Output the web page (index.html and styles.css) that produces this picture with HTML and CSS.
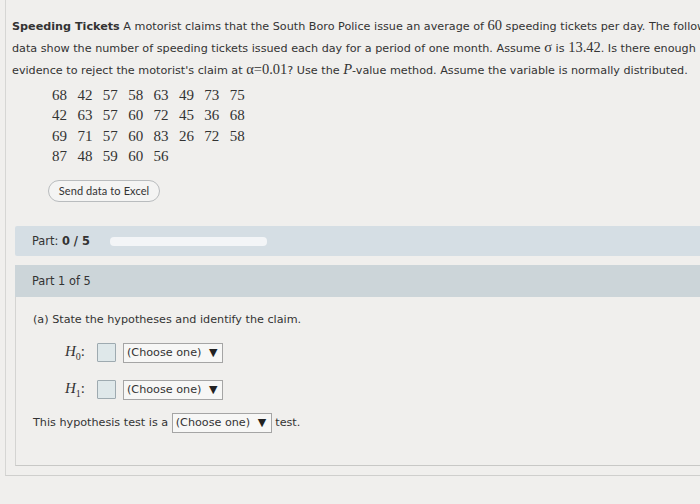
FILE: index.html
```html
<!DOCTYPE html>
<html>
<head>
<meta charset="utf-8">
<link rel="stylesheet" href="styles.css">
</head>
<body>
<div class="page">
  <div class="problem">
    <p class="statement"><b>Speeding Tickets</b> A motorist claims that the South Boro Police issue an average of <span class="m">60</span> speeding tickets per day. The following<br>data show the number of speeding tickets issued each day for a period of one month. Assume <span class="m">σ</span> is <span class="m">13.42</span>. Is there enough<br>evidence to reject the motorist's claim at <span class="m">α=0.01</span>? Use the <span class="m"><i>P</i></span>-value method. Assume the variable is normally distributed.</p>
    <div class="data">
      <div class="row"><span>68</span><span>42</span><span>57</span><span>58</span><span>63</span><span>49</span><span>73</span><span>75</span></div>
      <div class="row"><span>42</span><span>63</span><span>57</span><span>60</span><span>72</span><span>45</span><span>36</span><span>68</span></div>
      <div class="row"><span>69</span><span>71</span><span>57</span><span>60</span><span>83</span><span>26</span><span>72</span><span>58</span></div>
      <div class="row"><span>87</span><span>48</span><span>59</span><span>60</span><span>56</span></div>
    </div>
    <div class="btnrow"><span class="excel">Send data to Excel</span></div>
  </div>
  <div class="parts">
    <div class="partbar">
      <span>Part: <b>0 / 5</b></span>
      <span class="progress"></span>
    </div>
    <div class="partpanel">
      <div class="parthead">Part 1 of 5</div>
      <div class="partbody">
        <p class="q">(a) State the hypotheses and identify the claim.</p>
        <div class="hyp">
          <span class="hlabel"><i>H</i><sub>0</sub>:</span>
          <span class="box"></span>
          <span class="sel">(Choose one) <span class="arr">▼</span></span>
        </div>
        <div class="hyp">
          <span class="hlabel"><i>H</i><sub>1</sub>:</span>
          <span class="box"></span>
          <span class="sel">(Choose one) <span class="arr">▼</span></span>
        </div>
        <div class="testline">This hypothesis test is a <span class="sel">(Choose one) <span class="arr">▼</span></span> test.</div>
      </div>
    </div>
  </div>
</div>
</body>
</html>
```
FILE: styles.css
```css
html, body {
  margin: 0;
  padding: 0;
}
body {
  background: #f0efed;
  font-family: "DejaVu Sans", Verdana, sans-serif;
  color: #333;
  width: 700px;
  height: 504px;
  overflow: hidden;
}
.page {
  margin-left: 5px;
  width: 720px;
  height: 476px;
  border-left: 1px solid #d6d6d4;
  border-bottom: 1px solid #cfcfcd;
  box-sizing: border-box;
}
.problem {
  padding: 15px 0 0 6px;
}
.statement {
  margin: 0;
  font-size: 11.2px;
  line-height: 20px;
  white-space: nowrap;
}
.statement b {
  font-weight: bold;
}
.m {
  font-family: "Liberation Serif", "Times New Roman", serif;
  font-size: 14.5px;
}
.data {
  margin: 4px 0 0 40px;
  font-family: "Liberation Serif", "Times New Roman", serif;
  font-size: 15px;
  color: #333;
}
.row {
  display: flex;
  height: 20.3px;
  line-height: 20.3px;
}
.row span {
  width: 25.4px;
}
.btnrow {
  margin: 14px 0 0 36px;
  height: 22px;
}
.excel {
  display: inline-block;
  box-sizing: border-box;
  height: 22px;
  width: 112px;
  line-height: 19px;
  border: 1.5px solid #b9bcbe;
  border-radius: 11px;
  background: #f4f4f3;
  font-family: Lato, "Open Sans", sans-serif;
  font-size: 11px;
  color: #333;
  text-align: center;
  letter-spacing: 0.1px;
}
.parts {
  margin: 24px 0 0 9px;
}
.partbar {
  height: 30px;
  background: #d5dee4;
  border-radius: 2px 0 0 2px;
  display: flex;
  align-items: center;
  padding-left: 17px;
  font-size: 11.4px;
  gap: 20px;
}
.partbar b {
  font-weight: bold;
}
.progress {
  display: inline-block;
  width: 157px;
  height: 9px;
  background: #f3f5f7;
  border-radius: 4px;
}
.partpanel {
  margin-top: 9px;
  height: 201px;
  border-left: 1px solid #d4d4d2;
  border-bottom: 1px solid #c8c8c6;
  box-sizing: border-box;
}
.parthead {
  height: 32px;
  line-height: 32px;
  background: #ccd5d9;
  padding-left: 17px;
  font-size: 11.4px;
  margin-left: -1px;
}
.partbody {
  padding: 14px 0 0 17px;
  font-size: 11.2px;
}
.q {
  margin: 0;
  line-height: 18px;
}
.hyp {
  display: flex;
  align-items: center;
  margin-top: 12px;
  margin-left: 32px;
  height: 23px;
}
.hyp + .hyp {
  margin-top: 14px;
}
.hlabel {
  font-family: "Liberation Serif", "Times New Roman", serif;
  font-size: 15px;
  width: 32px;
  color: #333;
}
.hlabel sub {
  font-size: 10px;
}
.box {
  display: inline-block;
  width: 19px;
  height: 19px;
  box-sizing: border-box;
  border: 1px solid #9eaab0;
  background: #dfe8ea;
  border-radius: 1px;
}
.sel {
  display: inline-block;
  box-sizing: border-box;
  height: 20px;
  line-height: 18px;
  width: 100px;
  border: 1px solid #a5a5a5;
  background: #f7f7f6;
  padding-left: 3px;
  font-size: 11.2px;
  margin-left: 7px;
  white-space: nowrap;
}
.arr {
  font-size: 11px;
  margin-left: 4px;
  color: #222;
}
.testline {
  margin-top: 12px;
  line-height: 20px;
}
.testline .sel {
  margin-left: 0;
  width: 100px;
}
```
